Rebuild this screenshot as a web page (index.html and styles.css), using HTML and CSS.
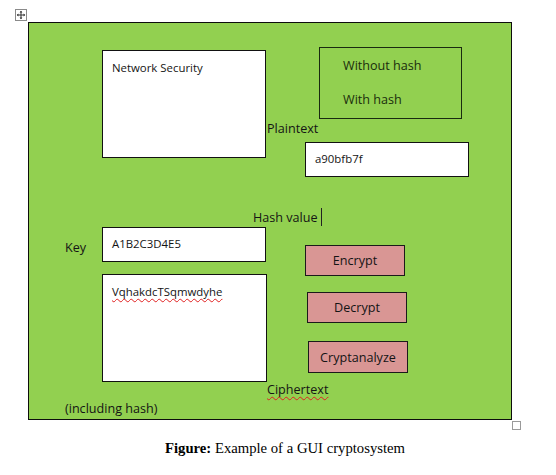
FILE: index.html
```html
<!DOCTYPE html>
<html>
<head>
<meta charset="utf-8">
<link rel="stylesheet" href="styles.css">
</head>
<body>
<div class="page">
  <div class="move-handle">
    <svg width="12" height="12" viewBox="0 0 12 12">
      <rect x="0.5" y="0.5" width="11" height="11" fill="#fff" stroke="#8a8a8a"/>
      <path d="M6 2.2 V9.8 M2.2 6 H9.8" stroke="#333" stroke-width="1"/>
      <path d="M6 1.8 L4.6 3.4 H7.4 Z M6 10.2 L4.6 8.6 H7.4 Z M1.8 6 L3.4 4.6 V7.4 Z M10.2 6 L8.6 4.6 V7.4 Z" fill="#333"/>
    </svg>
  </div>
  <div class="canvas">
    <div class="box box-plain"><span class="box-text">Network Security</span></div>
    <div class="options">
      <div class="option">Without hash</div>
      <div class="option">With hash</div>
    </div>
    <div class="label label-plaintext">Plaintext</div>
    <div class="box box-hash"><span class="box-text">a90bfb7f</span></div>
    <div class="label label-hash">Hash value<span class="caret"></span></div>
    <div class="label label-key">Key</div>
    <div class="box box-key"><span class="box-text">A1B2C3D4E5</span></div>
    <div class="box box-cipher"><span class="box-text squiggle">VqhakdcTSqmwdyhe</span></div>
    <div class="btn btn-encrypt">Encrypt</div>
    <div class="btn btn-decrypt">Decrypt</div>
    <div class="btn btn-analyze">Cryptanalyze</div>
    <div class="label label-cipher"><span class="squiggle">Ciphertext</span></div>
    <div class="label label-including">(including hash)</div>
  </div>
  <div class="resize-handle"></div>
  <p class="caption"><b>Figure:</b> Example of a GUI cryptosystem</p>
</div>
</body>
</html>
```
FILE: styles.css
```css
html, body {
  margin: 0;
  padding: 0;
  background: #fff;
}
.page {
  position: relative;
  width: 556px;
  height: 475px;
  padding: 22px 0 0 28px;
  box-sizing: border-box;
  font-family: "Open Sans", "Noto Sans", sans-serif;
  color: #141414;
}
.move-handle {
  position: absolute;
  left: 15px;
  top: 9px;
  width: 12px;
  height: 12px;
}
.move-handle svg { display: block; }
.canvas {
  position: relative;
  width: 484px;
  height: 398px;
  box-sizing: border-box;
  background: #92d050;
  border: 1px solid #0d0d0d;
}
.resize-handle {
  position: absolute;
  left: 512px;
  top: 421px;
  width: 7px;
  height: 7px;
  border: 1px solid #9a9a9a;
  background: #fff;
}
.box {
  position: absolute;
  box-sizing: border-box;
  background: #fff;
  border: 1px solid #111;
  padding: 0 0 0 9px;
  font-size: 11.4px;
  line-height: 16px;
}
.box-text { display: block; }
.box-plain { left: 73px; top: 27px; width: 164px; height: 108px; padding-top: 9px; }
.box-hash { left: 276px; top: 119px; width: 164px; height: 35px; padding-top: 8px; }
.box-key { left: 73px; top: 204px; width: 164px; height: 35px; padding-top: 8px; }
.box-cipher { left: 73px; top: 251px; width: 165px; height: 108px; padding-top: 9px; }
.squiggle {
  text-decoration: underline wavy #e02020;
  text-decoration-thickness: 1px;
  text-underline-offset: 2px;
  text-decoration-skip-ink: none;
}
.options {
  position: absolute;
  left: 290px;
  top: 24px;
  width: 143px;
  height: 72px;
  box-sizing: border-box;
  border: 1px solid #1a2a10;
  padding: 9px 0 0 23px;
  display: flex;
  flex-direction: column;
  gap: 16px;
  font-size: 12.6px;
  line-height: 18px;
  color: #1a2e0c;
}
.label {
  position: absolute;
  font-size: 12.6px;
  line-height: 16px;
  white-space: nowrap;
}
.label-plaintext { left: 238px; top: 98px; }
.label-hash { left: 224px; top: 185px; }
.caret {
  display: inline-block;
  width: 1px;
  height: 18px;
  background: #222;
  margin-left: 3px;
  vertical-align: -4px;
}
.label-key { left: 36px; top: 217px; }
.label-cipher { left: 238px; top: 359px; }
.label-including { left: 36px; top: 378px; }
.btn {
  position: absolute;
  box-sizing: border-box;
  width: 100px;
  height: 31px;
  background: #d99694;
  border: 1px solid #1a1a1a;
  display: flex;
  align-items: center;
  justify-content: center;
  font-size: 12.6px;
}
.btn-encrypt { left: 276px; top: 222px; }
.btn-decrypt { left: 278px; top: 269px; }
.btn-analyze { left: 279px; top: 318px; height: 32px; }
.caption {
  margin: 20px 0 0 137px;
  font-family: "Liberation Serif", "Times New Roman", serif;
  font-size: 14.7px;
  line-height: 16px;
  color: #000;
}
```
